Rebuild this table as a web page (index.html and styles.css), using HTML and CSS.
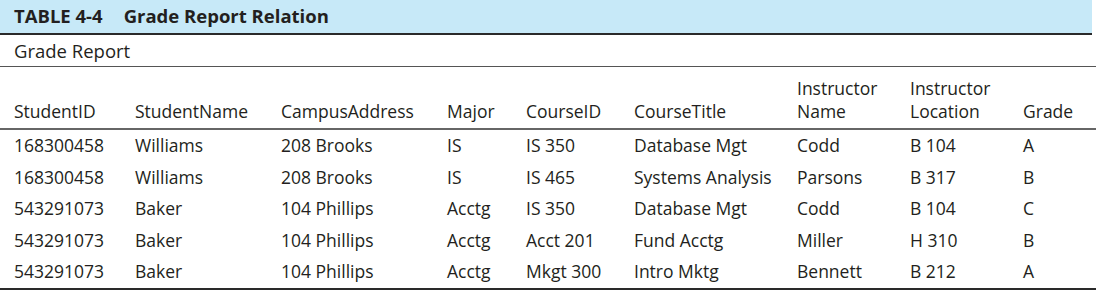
FILE: index.html
```html
<!DOCTYPE html>
<html lang="en">
<head>
    <meta charset="UTF-8">
    <meta name="viewport" content="width=device-width, initial-scale=1.0">
    <title>Grade Report Relation</title>
    <link rel="stylesheet" href="styles.css">
</head>
<body>
    <div class="table-box">
        <div class="caption">
            <span class="caption-label">TABLE 4-4</span>
            <span class="caption-title">Grade Report Relation</span>
        </div>

        <div class="subtitle">Grade Report</div>

        <table class="relation">
            <colgroup>
                <col class="c-id">
                <col class="c-name">
                <col class="c-addr">
                <col class="c-major">
                <col class="c-course">
                <col class="c-title">
                <col class="c-inst">
                <col class="c-loc">
                <col class="c-grade">
            </colgroup>
            <thead>
                <tr>
                    <th>StudentID</th>
                    <th>StudentName</th>
                    <th>CampusAddress</th>
                    <th>Major</th>
                    <th>CourseID</th>
                    <th>CourseTitle</th>
                    <th>Instructor<br>Name</th>
                    <th>Instructor<br>Location</th>
                    <th>Grade</th>
                </tr>
            </thead>
            <tbody>
                <tr>
                    <td>168300458</td>
                    <td>Williams</td>
                    <td>208 Brooks</td>
                    <td>IS</td>
                    <td>IS 350</td>
                    <td>Database Mgt</td>
                    <td>Codd</td>
                    <td>B 104</td>
                    <td>A</td>
                </tr>
                <tr>
                    <td>168300458</td>
                    <td>Williams</td>
                    <td>208 Brooks</td>
                    <td>IS</td>
                    <td>IS 465</td>
                    <td>Systems Analysis</td>
                    <td>Parsons</td>
                    <td>B 317</td>
                    <td>B</td>
                </tr>
                <tr>
                    <td>543291073</td>
                    <td>Baker</td>
                    <td>104 Phillips</td>
                    <td>Acctg</td>
                    <td>IS 350</td>
                    <td>Database Mgt</td>
                    <td>Codd</td>
                    <td>B 104</td>
                    <td>C</td>
                </tr>
                <tr>
                    <td>543291073</td>
                    <td>Baker</td>
                    <td>104 Phillips</td>
                    <td>Acctg</td>
                    <td>Acct 201</td>
                    <td>Fund Acctg</td>
                    <td>Miller</td>
                    <td>H 310</td>
                    <td>B</td>
                </tr>
                <tr>
                    <td>543291073</td>
                    <td>Baker</td>
                    <td>104 Phillips</td>
                    <td>Acctg</td>
                    <td>Mkgt 300</td>
                    <td>Intro Mktg</td>
                    <td>Bennett</td>
                    <td>B 212</td>
                    <td>A</td>
                </tr>
            </tbody>
        </table>
    </div>
</body>
</html>
```

FILE: styles.css
```css
body {
    margin: 0;
    background: #fff;
    font-family: "Open Sans", "Noto Sans", sans-serif;
    color: #231f20;
}
.table-box {
    width: 1096px;
}
.caption {
    width: 1078px;
    height: 30px;
    margin-right: 4px;
    padding: 0 0 3px 14px;
    background-color: #c7e9f8;
    border-bottom: 2px solid #2a2a2a;
    display: flex;
    align-items: center;
    font-size: 18.5px;
    font-weight: 700;
}
.caption-label {
    margin-right: 21px;
}
.subtitle {
    height: 31px;
    padding-left: 14px;
    border-bottom: 1px solid #555;
    display: flex;
    align-items: center;
    font-size: 18.5px;
}
.relation {
    width: 1096px;
    table-layout: fixed;
    border-collapse: collapse;
    font-size: 17.5px;
}
.c-id { width: 135px; }
.c-name { width: 146px; }
.c-addr { width: 166px; }
.c-major { width: 79px; }
.c-course { width: 108px; }
.c-title { width: 163px; }
.c-inst { width: 113px; }
.c-loc { width: 113px; }
.c-grade { width: 73px; }
.relation th {
    font-weight: 400;
    text-align: left;
    vertical-align: bottom;
    line-height: 23px;
    padding: 0 0 5px 0;
    border-bottom: 2px solid #666;
}
.relation thead tr {
    height: 62px;
}
.relation td {
    padding: 0;
    height: 31.5px;
    line-height: 23px;
    white-space: nowrap;
}
.relation th:first-child,
.relation td:first-child {
    padding-left: 14px;
}
.relation tbody tr:last-child td {
    border-bottom: 2px solid #2a2a2a;
}
```
